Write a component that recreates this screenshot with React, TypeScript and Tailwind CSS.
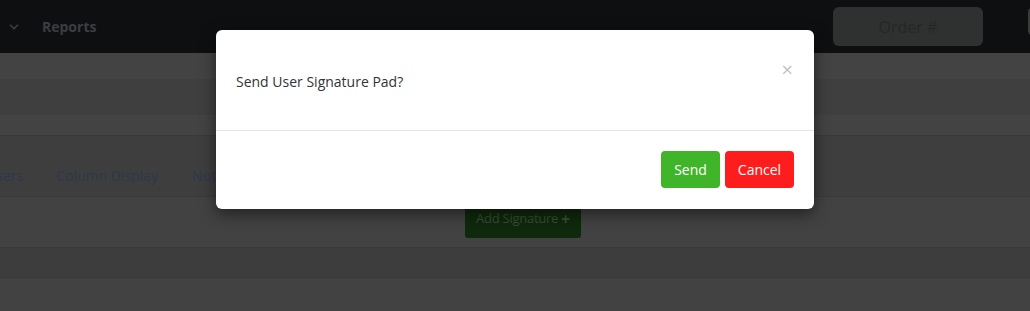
import { ChevronDown } from "lucide-react";

const TABS = [
  { label: "Users", className: "-ml-[14px] mr-[33px]" },
  { label: "Column Display", className: "mr-[34px]" },
  { label: "Notes", className: "" },
] as const;

function SignatureModal() {
  return (
    <div className="absolute left-[216px] top-[30px] w-[598px] rounded-[6px] bg-white shadow-[0_5px_15px_rgba(0,0,0,0.5)]">
      <div className="relative h-[101px] border-b border-[#e5e5e5] px-5 pt-[42px]">
        <p className="text-[14px] leading-5 text-[#333333]">Send User Signature Pad?</p>
        <button className="absolute right-[21px] top-[30px] text-[20px] leading-[20px] text-[#c2c2c2]">
          ×
        </button>
      </div>
      <div className="flex justify-end gap-[5px] px-5 pb-[21px] pt-5">
        <button className="h-[37px] w-[59px] rounded-[4px] bg-[#40b52a] text-[14px] text-white">
          Send
        </button>
        <button className="h-[37px] w-[69px] rounded-[4px] bg-[#fd1d1d] text-[14px] text-white">
          Cancel
        </button>
      </div>
    </div>
  );
}

export default function App() {
  return (
    <div className="relative h-[311px] w-full overflow-hidden bg-[#424242] font-['Open_Sans',sans-serif]">
      <header className="flex h-[53px] items-center bg-[#0e0f11]">
        <ChevronDown className="ml-[7px] h-[14px] w-[14px] text-[#3b3e41]" strokeWidth={3} />
        <span className="ml-[21px] text-[14px] font-bold text-[#3b3e41]">Reports</span>
        <div className="ml-auto flex h-[39px] w-[150px] items-center justify-center rounded-[6px] bg-[#2f3130] text-[16px] text-[#252726]">
          Order #
        </div>
        <div className="ml-[45px] -mr-[8px] mt-[8px] h-[27px] w-[10px] self-start rounded-[4px] bg-[#3a3b3b]" />
      </header>

      <div className="h-[26px] bg-[#434343]" />
      <div className="h-[36px] bg-[#3f3f3f]" />
      <div className="h-[21px] border-b border-[#393939] bg-[#434343]" />

      <nav className="flex h-[61px] items-center border-b border-[#3a3a3a] bg-[#3e3e3e] pt-[18px] text-[14px] text-[#2c394b]">
        {TABS.map((tab) => (
          <span key={tab.label} className={tab.className}>
            {tab.label}
          </span>
        ))}
      </nav>

      <div className="flex h-[51px] justify-center border-b border-[#3a3a3a] bg-[#424242] pl-[16px] pt-[3px]">
        <button className="flex h-[38px] items-center gap-[3px] rounded-[3px] bg-[#0f290c] px-[11px] text-[13px] tracking-[-0.02em] text-[#3b4b38]">
          Add Signature
          <span className="text-[16px] font-bold leading-none">+</span>
        </button>
      </div>

      <div className="h-[30px] border-b border-[#393939] bg-[#3d3d3d]" />
      <div className="h-[34px] bg-[#424242]" />

      <SignatureModal />
    </div>
  );
}
